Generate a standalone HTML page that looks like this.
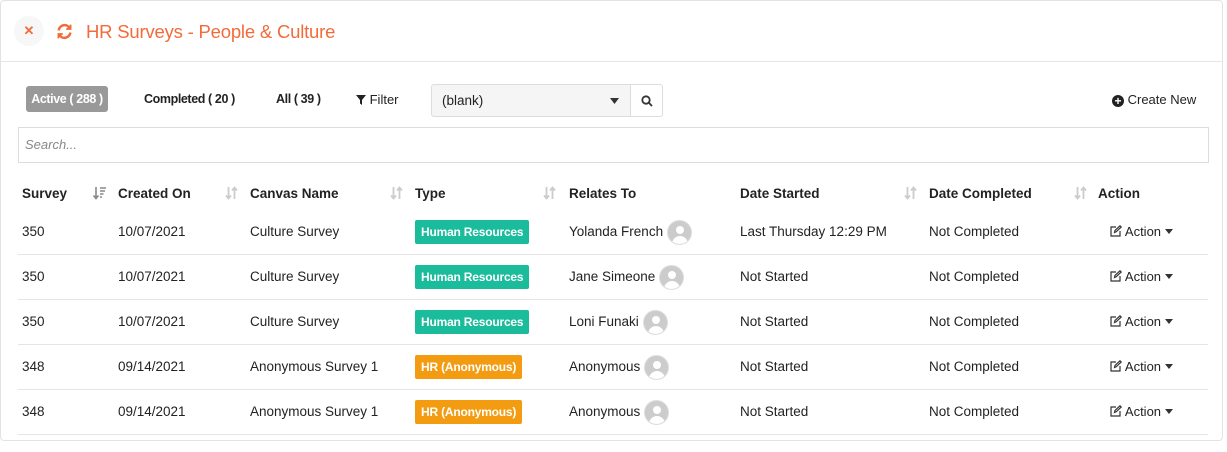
<!DOCTYPE html>
<html><head><style>
*{box-sizing:border-box;margin:0;padding:0}
body{width:1227px;height:452px;background:#fff;font-family:"Liberation Sans",Arial,sans-serif;font-size:13.5px;color:#222;position:relative;overflow:hidden}
.panel{position:absolute;left:0;top:0;width:1223px;height:441px;border:1px solid #e3e3e3;border-radius:4px}
.hdr{position:absolute;left:0;top:0;width:100%;height:61px;border-bottom:1px solid #e6e6e6}
.abs{position:absolute;white-space:nowrap}
.th{font-weight:bold;font-size:13.5px;top:186px}
.sort{top:186px}
.td{font-size:13.5px}
.badge{position:absolute;color:#fff;font-weight:bold;font-size:12px;padding:0 6px;height:24px;line-height:24px;border-radius:2px;letter-spacing:-0.2px}
.g{background:#1abc9c}.o{background:#f39c12}
.av{display:inline-block;width:25px;height:25px;border-radius:50%;background:#ccc;vertical-align:middle;margin-left:4px;position:relative;overflow:hidden;border:1px solid #ddd}
.av:before{content:"";position:absolute;left:8px;top:5px;width:8px;height:8px;border-radius:50%;background:#fff}
.av:after{content:"";position:absolute;left:4px;top:15px;width:16px;height:12px;border-radius:8px 8px 0 0;background:#fff}
.line{position:absolute;left:18px;width:1190px;height:1px;background:#e5e5e5}
</style></head><body>
<div class="panel">
<div class="hdr">
<div class="abs" style="left:13px;top:15px;width:30px;height:30px;border-radius:50%;background:#f7f7f7;color:#f26b3a;font-weight:bold;text-align:center;line-height:30px;font-size:13px">✕</div>
<svg class="abs" style="left:55px;top:22px" width="17" height="17" viewBox="0 0 16 16" fill="none" stroke="#f26b3a" stroke-width="2.4"><path d="M2.5 7A5.6 5.6 0 0 1 13 5"/><path d="M13.5 9A5.6 5.6 0 0 1 3 11"/><path d="M13.8 1.5v4.2H9.6" fill="#f26b3a" stroke-width="1.5"/><path d="M2.2 14.5v-4.2h4.2" fill="#f26b3a" stroke-width="1.5"/></svg>
<div class="abs" style="left:85px;top:20px;font-size:18.5px;color:#f26b3a;letter-spacing:-0.2px">HR Surveys - People &amp; Culture</div>
</div>
</div>
<div class="abs" style="left:26px;top:86px;width:82px;height:26px;background:#999;border-radius:3px;color:#fff;font-weight:bold;font-size:12.5px;line-height:26px;text-align:center;letter-spacing:-0.4px">Active ( 288 )</div>
<div class="abs" style="left:144px;top:92px;font-weight:bold;font-size:12.5px;letter-spacing:-0.4px">Completed ( 20 )</div>
<div class="abs" style="left:276px;top:92px;font-weight:bold;font-size:12.5px;letter-spacing:-0.4px">All ( 39 )</div>
<div class="abs" style="left:356px;top:92px;font-size:13px"><svg width="10" height="10" viewBox="0 0 10 10" style="vertical-align:-1px"><path d="M0 0h10L6 5v5L4 8.5V5z" fill="#222"/></svg> Filter</div>
<div class="abs" style="left:431px;top:84px;width:200px;height:33px;background:#f5f5f5;border:1px solid #ddd;border-radius:3px 0 0 3px;font-size:13.5px;line-height:31px;padding-left:10px">(blank)<svg style="position:absolute;right:11px;top:13px" width="9" height="6"><path d="M0 0h9L4.5 6z" fill="#333"/></svg></div>
<div class="abs" style="left:630px;top:84px;width:33px;height:33px;border:1px solid #ddd;border-radius:0 3px 3px 0">
<svg style="position:absolute;left:10px;top:10px" width="12" height="12" viewBox="0 0 12 12" fill="none" stroke="#333" stroke-width="1.8"><circle cx="5" cy="5" r="3.7"/><path d="M7.8 7.8L11 11"/></svg></div>
<div class="abs" style="left:1112px;top:92px;font-size:13px"><span style="display:inline-block;width:12px;height:12px;border-radius:50%;background:#222;color:#fff;font-size:12px;line-height:12px;text-align:center;font-weight:bold;vertical-align:-1px">+</span> Create New</div>
<div class="abs" style="left:18px;top:127px;width:1191px;height:36px;border:1px solid #ddd;padding-left:6px;line-height:34px;font-style:italic;color:#888;font-size:13px">Search...</div>

<div class="abs th" style="left:22px">Survey</div>
<svg class="abs sort" style="left:93px" width="13" height="14" viewBox="0 0 13 14" fill="none" stroke="#888" stroke-width="1.6"><path d="M3 1v11M0.5 9.5L3 12.5 5.5 9.5"/><path d="M7 2h6M7 5h5M7 8h3.5M7 11h2"/></svg>
<div class="abs th" style="left:118px">Created On</div>
<div class="abs th" style="left:250px">Canvas Name</div>
<div class="abs th" style="left:415px">Type</div>
<div class="abs th" style="left:569px">Relates To</div>
<div class="abs th" style="left:740px">Date Started</div>
<div class="abs th" style="left:929px">Date Completed</div>
<div class="abs th" style="left:1098px">Action</div>

<div id="rows"></div>
<script>
[225,390,543,904,1074].forEach(function(x){document.body.insertAdjacentHTML('beforeend','<svg class="abs sort" style="left:'+x+'px" width="13" height="14" viewBox="0 0 13 14" fill="none" stroke="#ccc" stroke-width="1.8"><path d="M3.5 1v11.5M1 9.5l2.5 3 2.5-3"/><path d="M9.5 13V1.5M7 4.5l2.5-3 2.5 3"/></svg>');});
var d=[["350","10/07/2021","Culture Survey","Human Resources","g","Yolanda French","Last Thursday 12:29 PM"],
["350","10/07/2021","Culture Survey","Human Resources","g","Jane Simeone","Not Started"],
["350","10/07/2021","Culture Survey","Human Resources","g","Loni Funaki","Not Started"],
["348","09/14/2021","Anonymous Survey 1","HR (Anonymous)","o","Anonymous","Not Started"],
["348","09/14/2021","Anonymous Survey 1","HR (Anonymous)","o","Anonymous","Not Started"]];
var h="";d.forEach(function(r,i){var y=224+i*45;
h+='<div class="abs td" style="left:22px;top:'+y+'px">'+r[0]+'</div>'+
'<div class="abs td" style="left:118px;top:'+y+'px">'+r[1]+'</div>'+
'<div class="abs td" style="left:250px;top:'+y+'px">'+r[2]+'</div>'+
'<div class="badge '+r[4]+'" style="left:415px;top:'+(y-4)+'px">'+r[3]+'</div>'+
'<div class="abs td" style="left:569px;top:'+(y-6)+'px;line-height:27px">'+r[5]+'<span class="av"></span></div>'+
'<div class="abs td" style="left:740px;top:'+y+'px">'+r[6]+'</div>'+
'<div class="abs td" style="left:929px;top:'+y+'px">Not Completed</div>'+
'<div class="abs td" style="left:1110px;top:'+y+'px;font-size:13px"><svg width="12" height="12" viewBox="0 0 12 12" fill="none" stroke="#333" stroke-width="1.2" style="vertical-align:-1px"><path d="M6 2H1v9h9V6"/><path d="M4.5 7.5L5 5.5 10 0.8l1.2 1.2-5 4.8z"/></svg> Action <svg width="8" height="5" style="vertical-align:2px"><path d="M0 0h8L4 5z" fill="#333"/></svg></div>'+
'<div class="line" style="top:'+(y+30)+'px"></div>';});
document.getElementById("rows").innerHTML=h;
</script>
</body></html>
